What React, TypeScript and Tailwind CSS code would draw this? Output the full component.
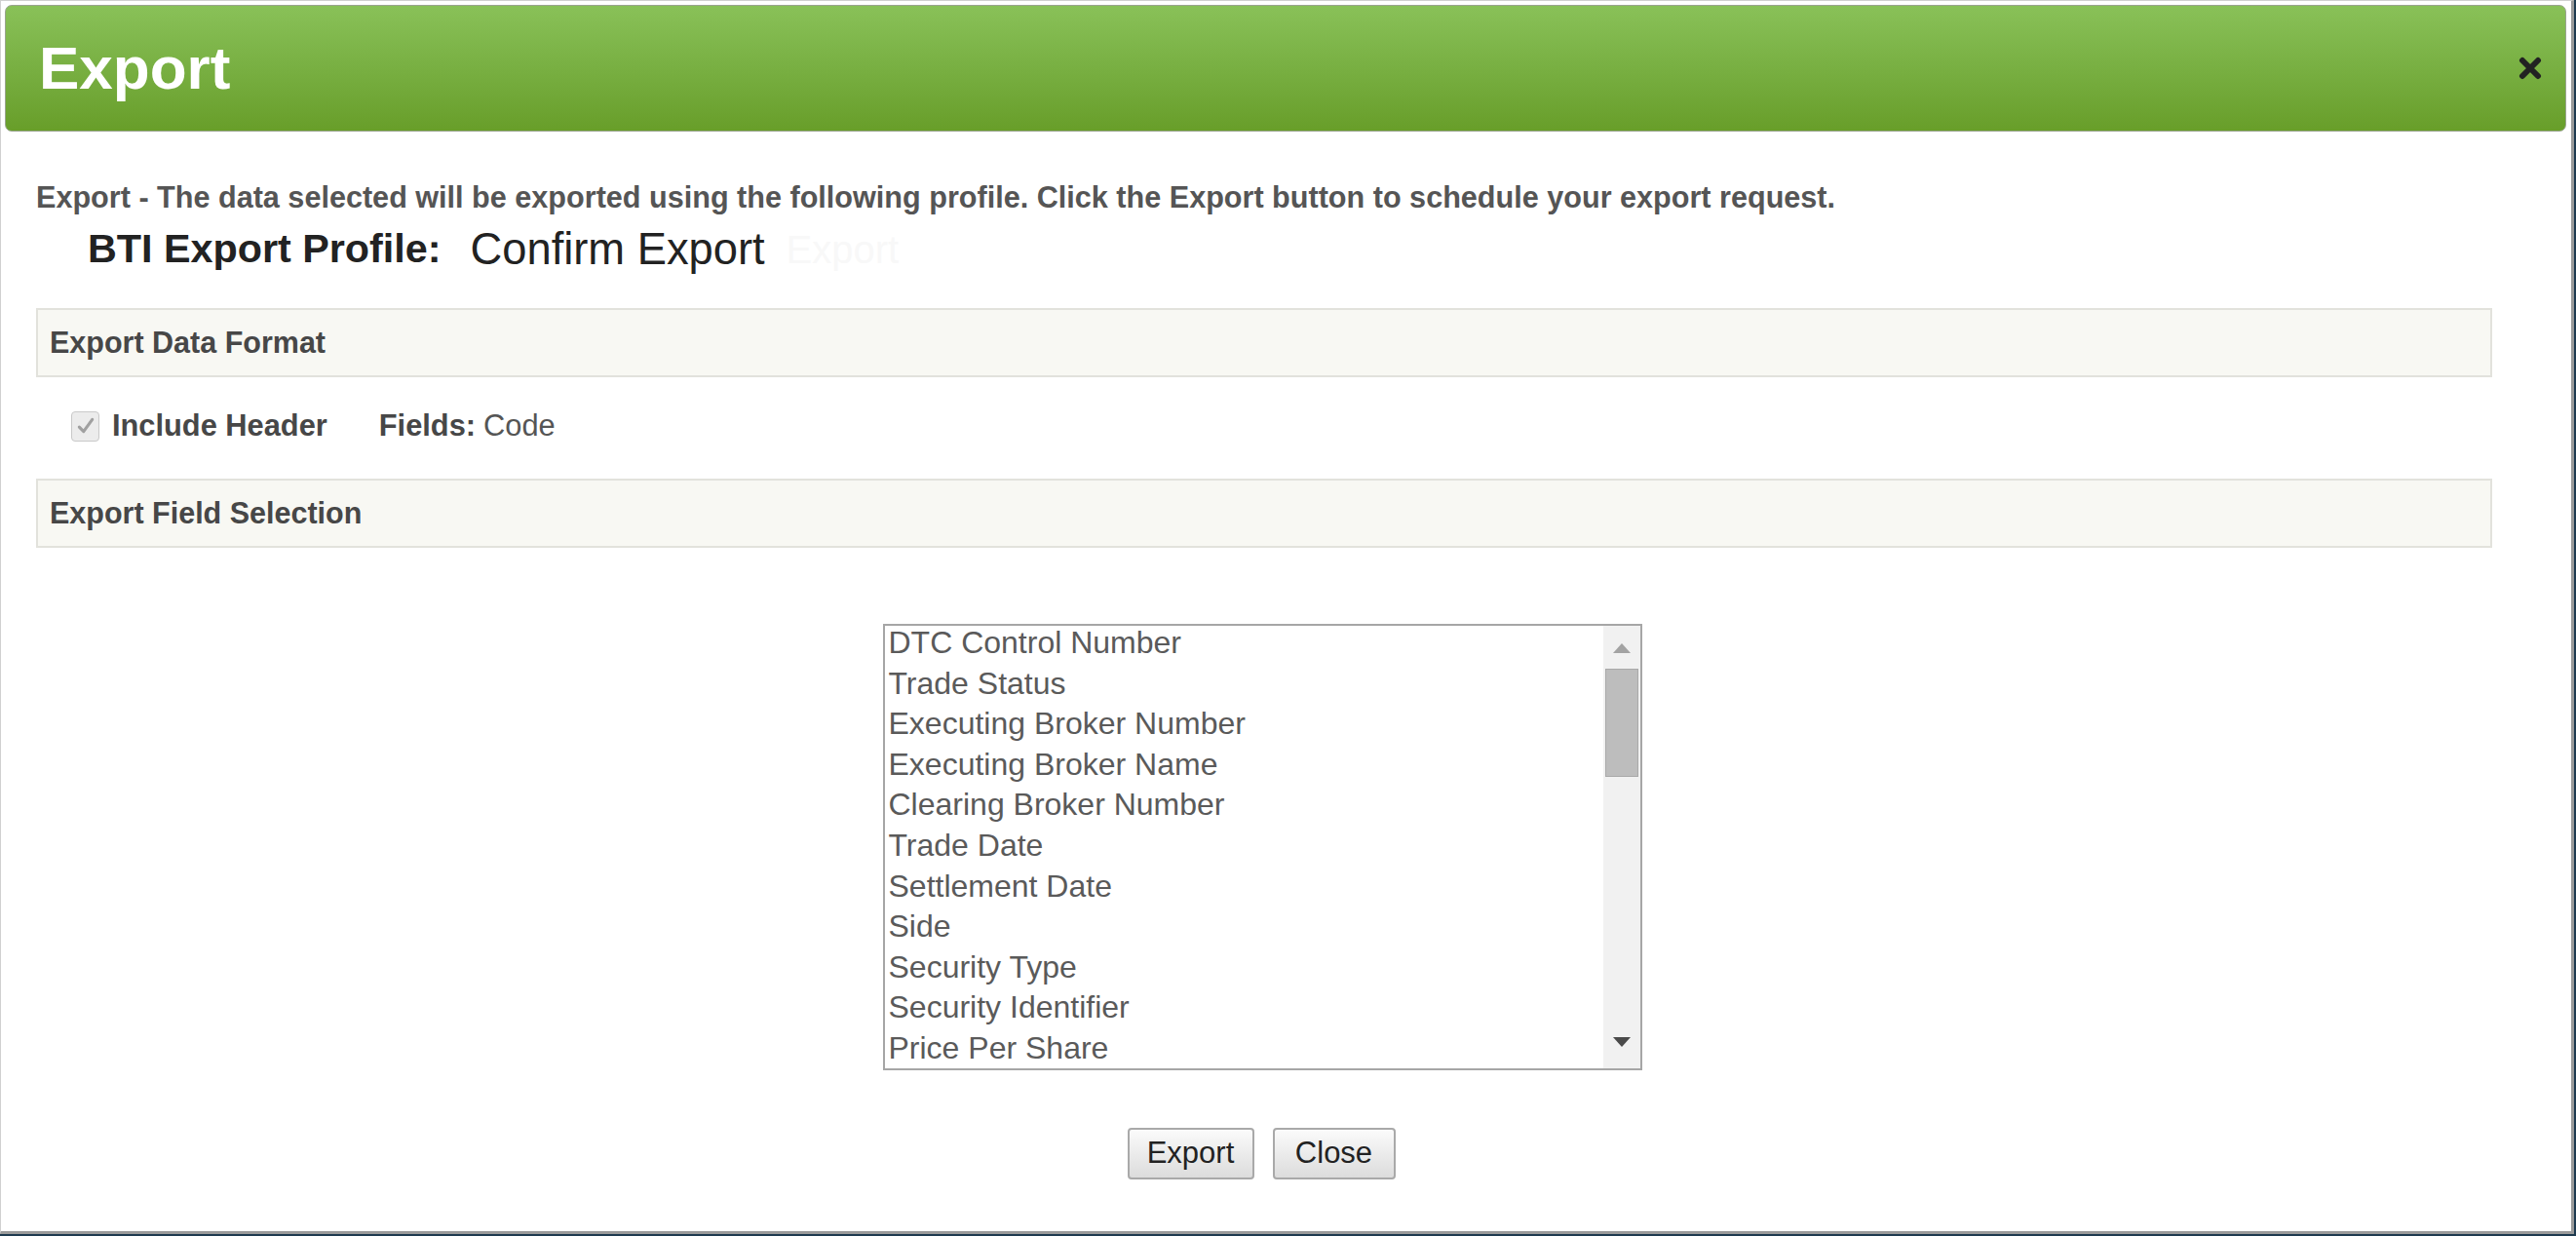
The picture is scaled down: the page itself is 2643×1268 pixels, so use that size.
const fields = [
  "DTC Control Number",
  "Trade Status",
  "Executing Broker Number",
  "Executing Broker Name",
  "Clearing Broker Number",
  "Trade Date",
  "Settlement Date",
  "Side",
  "Security Type",
  "Security Identifier",
  "Price Per Share",
];

function SectionBar({ title }: { title: string }) {
  return (
    <div className="h-[71px] w-[2520px] flex items-center pl-[12px] border-2 border-[#e2e2dc] bg-[#f8f8f3]">
      <span className="text-[30.5px] font-bold text-[#474747]">{title}</span>
    </div>
  );
}

export default function App() {
  return (
    <div
      className="w-[2643px] h-[1268px] bg-[#1e3a4f] overflow-hidden"
      style={{ fontFamily: '"Liberation Sans", Arial, sans-serif' }}
    >
      <div className="w-[2641px] h-[1266px] bg-white border-t border-l border-[#d0d0d0] border-r-[3px] border-b-[3px] border-r-[#9a9a9a] border-b-[#9a9a9a] flex flex-col">
        {/* title bar */}
        <div className="ml-[4px] mt-[4px] w-[2628px] h-[130px] rounded-[7px] border border-[#9aa48f] bg-gradient-to-b from-[#89c158] to-[#689e29] flex items-center justify-between pl-[34px] pr-[24px]">
          <span className="text-[62px] font-bold text-white leading-none">Export</span>
          <svg width="24" height="24" viewBox="0 0 24 24">
            <path
              d="M4 4 L20 20 M20 4 L4 20"
              stroke="#222"
              strokeWidth="6"
              strokeLinecap="round"
            />
          </svg>
        </div>

        <div className="pl-[36px] flex flex-col">
          <div className="mt-[47px] h-[40px] leading-[40px] text-[30.6px] font-bold text-[#555] whitespace-nowrap">
            Export - The data selected will be exported using the following profile. Click the Export button to schedule your export request.
          </div>

          <div className="mt-[12px] h-[44px] flex items-center pl-[53px] whitespace-nowrap">
            <span className="text-[41.3px] font-bold text-[#222]">BTI Export Profile:</span>
            <span className="ml-[30px] text-[45.3px] text-[#222]">Confirm Export</span>
            <span className="ml-[22px] text-[40px] text-[#f8f8f8]">Export</span>
          </div>

          <div className="mt-[38px]">
            <SectionBar title="Export Data Format" />
          </div>

          <div className="mt-[30px] h-[40px] flex items-center pl-[36px] text-[30.8px] whitespace-nowrap">
            <div className="w-[29px] h-[31px] rounded-[4px] border border-[#c9c9c9] bg-[#ececec] flex items-center justify-center">
              <svg width="20" height="20" viewBox="0 0 18 18">
                <path
                  d="M3 10 L7 14 L15 3"
                  fill="none"
                  stroke="#a0a0a0"
                  strokeWidth="2.8"
                  strokeLinecap="round"
                  strokeLinejoin="round"
                />
              </svg>
            </div>
            <span className="ml-[13px] font-bold text-[#474747]">Include Header</span>
            <span className="ml-[53px] font-bold text-[#474747]">Fields:</span>
            <span className="ml-[8px] text-[#555]">Code</span>
          </div>

          <div className="mt-[34px]">
            <SectionBar title="Export Field Selection" />
          </div>

          {/* field list */}
          <div className="w-[2520px] flex justify-center mt-[78px] pr-[4px]">
            <div className="w-[779px] h-[458px] border-2 border-[#a6a6a6] bg-white flex overflow-hidden">
              <div className="flex-1 pl-[4px] -mt-[3px]">
                {fields.map((f) => (
                  <div
                    key={f}
                    className="h-[41.6px] leading-[41.6px] text-[32px] text-[#5a5a5a] whitespace-nowrap"
                  >
                    {f}
                  </div>
                ))}
              </div>
              <div className="w-[38px] h-full bg-[#f1f1f1] flex flex-col items-center">
                <svg width="18" height="10" viewBox="0 0 18 10" className="mt-[18px]">
                  <path d="M9 0 L18 10 L0 10 Z" fill="#a3a3a3" />
                </svg>
                <div className="mt-[16px] w-[34px] h-[111px] bg-[#bdbdbd] border border-[#a9a9a9]" />
                <div className="flex-1" />
                <svg width="18" height="10" viewBox="0 0 18 10" className="mb-[22px]">
                  <path d="M0 0 L18 0 L9 10 Z" fill="#4a4a4a" />
                </svg>
              </div>
            </div>
          </div>

          {/* buttons */}
          <div className="w-[2520px] flex justify-center gap-[19px] mt-[59px] pr-[6px]">
            <button className="w-[130px] h-[53px] rounded-[4px] border-2 border-[#a9a9a9] bg-gradient-to-b from-[#fbfbfb] to-[#dcdcdc] text-[31px] text-[#222]">
              Export
            </button>
            <button className="w-[126px] h-[53px] rounded-[4px] border-2 border-[#a9a9a9] bg-gradient-to-b from-[#fbfbfb] to-[#dcdcdc] text-[31px] text-[#222]">
              Close
            </button>
          </div>
        </div>
      </div>
    </div>
  );
}
